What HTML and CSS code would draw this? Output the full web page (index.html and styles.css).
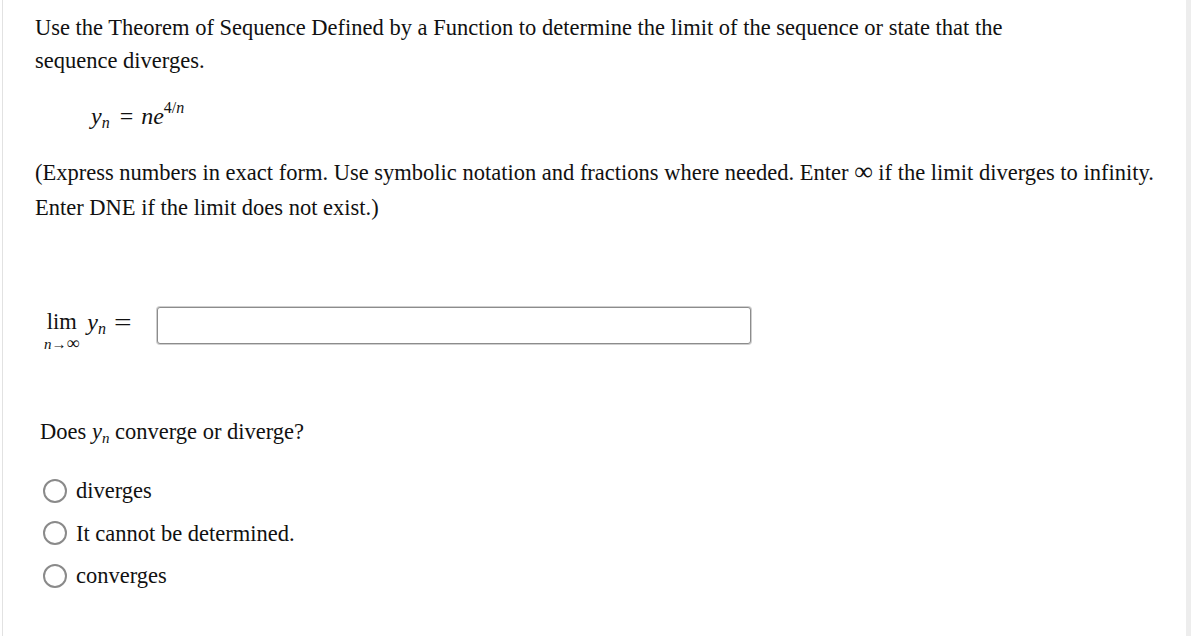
FILE: index.html
```html
<!DOCTYPE html>
<html>
<head>
<meta charset="utf-8">
<link rel="stylesheet" href="styles.css">
</head>
<body>
<div class="page">
  <div class="edge-left"></div>
  <main class="content">
    <p class="intro">Use the Theorem of Sequence Defined by a Function to determine the limit of the sequence or state that the sequence diverges.</p>
    <div class="equation"><span class="mi">y</span><sub class="mi">n</sub><span class="eq">=</span><span class="mi">ne</span><sup class="sup"><span class="num">4</span>/<span class="mi">n</span></sup></div>
    <p class="note">(Express numbers in exact form. Use symbolic notation and fractions where needed. Enter <span class="inf">∞</span> if the limit diverges to infinity. Enter DNE if the limit does not exist.)</p>
    <div class="limit-row">
      <div class="lim">
        <span class="lim-word">lim</span>
        <span class="lim-under"><span class="mi">n</span>→<span class="inf-small">∞</span></span>
      </div>
      <div class="lim-expr"><span class="mi">y</span><sub class="mi">n</sub></div>
      <span class="eq2">=</span>
      <div class="answer"></div>
    </div>
    <p class="question">Does <span class="mi">y</span><sub class="mi sub2">n</sub> converge or diverge?</p>
    <ul class="options">
      <li class="option"><span class="radio"></span><span>diverges</span></li>
      <li class="option"><span class="radio"></span><span>It cannot be determined.</span></li>
      <li class="option"><span class="radio"></span><span>converges</span></li>
    </ul>
  </main>
  <div class="edge-right"></div>
</div>
</body>
</html>
```
FILE: styles.css
```css
html, body {
  margin: 0;
  padding: 0;
  background: #ffffff;
}
body {
  font-family: "Liberation Serif", "Times New Roman", serif;
  font-size: 22.5px;
  color: #111;
}
.page {
  display: flex;
  min-height: 636px;
}
.edge-left {
  width: 2px;
  border-right: 1px solid #e2e2e2;
  flex: none;
}
.content {
  flex: 1;
  padding: 11px 30px 0 32px;
}
.edge-right {
  width: 5px;
  background: #ededed;
  flex: none;
}
.intro {
  margin: 0;
  line-height: 33px;
  max-width: 1000px;
}
.mi {
  font-style: italic;
}
sub, sup {
  line-height: 0;
}
sub {
  font-size: 15px;
  vertical-align: -4px;
}
.equation {
  margin: 24px 0 0 56px;
  line-height: 30px;
  font-size: 24px;
}
.equation .eq {
  margin: 0 8px 0 10px;
}
.equation sub {
  font-size: 16px;
}
.sup {
  font-size: 16px;
  vertical-align: 11px;
}
.sup .num {
  font-style: normal;
}
.note {
  margin: 24px 0 0 0;
  line-height: 35px;
}
.inf {
  font-size: 26px;
  line-height: 20px;
}
.limit-row {
  display: flex;
  align-items: flex-start;
  margin: 82px 0 0 0;
}
.lim {
  display: flex;
  flex-direction: column;
  align-items: center;
  margin-left: 9px;
  margin-top: 4px;
}
.lim-word {
  line-height: 22px;
}
.lim-under {
  font-size: 15px;
  line-height: 16px;
  margin-top: 2px;
}
.inf-small {
  font-size: 18px;
}
.lim-expr {
  margin: 3px 0 0 8px;
  line-height: 24px;
  font-size: 24px;
}
.lim-expr sub {
  font-size: 16px;
}
.eq2 {
  margin: 3px 0 0 10px;
  line-height: 24px;
  font-size: 24px;
  transform: scaleX(1.3);
}
.answer {
  width: 592px;
  height: 35px;
  margin-left: 27px;
  border: 1px solid #8c8c8c;
  box-shadow: 0 0 0 1px #cfcfcf;
  border-radius: 3px;
  background: #fff;
}
.question {
  margin: 67px 0 0 5px;
  line-height: 26px;
}
.sub2 {
  vertical-align: -4px;
}
.options {
  list-style: none;
  margin: 32px 0 0 0;
  padding: 0;
  display: flex;
  flex-direction: column;
  gap: 15.5px;
}
.option {
  display: flex;
  align-items: center;
  gap: 9px;
  line-height: 27px;
  margin-left: 8px;
}
.radio {
  width: 20px;
  height: 20px;
  border: 2px solid #8a8a8a;
  border-radius: 50%;
  flex: none;
}
```
